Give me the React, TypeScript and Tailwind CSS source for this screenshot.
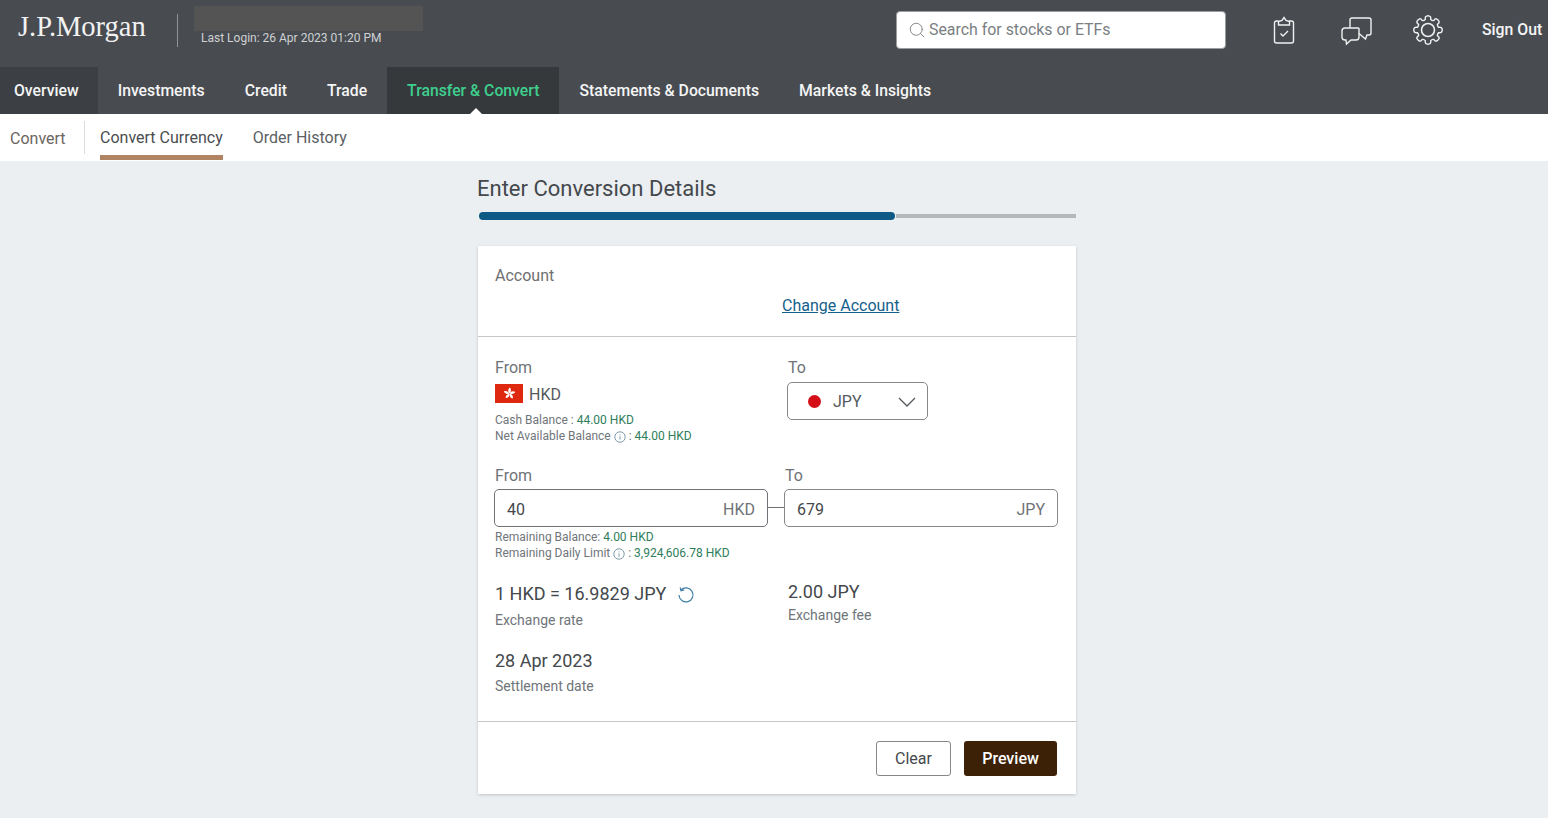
import type { ReactNode } from "react";
import { Search } from "lucide-react";

const tabs = ["Overview", "Investments", "Credit", "Trade", "Transfer & Convert", "Statements & Documents", "Markets & Insights"];

// polar point on the gear, centred on 15,15
function pt(r: number, deg: number) {
  const a = ((deg - 90) * Math.PI) / 180;
  return `${(15 + r * Math.cos(a)).toFixed(2)} ${(15 + r * Math.sin(a)).toFixed(2)}`;
}

function gearPath() {
  const out = 14;
  const inner = 11;
  let d = `M${pt(inner, -14)}`;
  for (let i = 0; i < 8; i++) {
    const a = i * 45;
    d += ` Q${pt(out, a - 13)} ${pt(out, a - 6)}`;
    d += ` Q${pt(out + 0.5, a)} ${pt(out, a + 6)}`;
    d += ` Q${pt(out, a + 13)} ${pt(inner, a + 14)}`;
    d += ` Q${pt(inner - 1, a + 22.5)} ${pt(inner, a + 31)}`;
  }
  return d + "Z";
}

function ClipboardIcon() {
  return (
    <svg width="22" height="28" viewBox="0 0 22 28" fill="none" stroke="#f0f0f0" strokeWidth="1.4">
      <path d="M5.5 5H3.5C2.4 5 1.5 5.9 1.5 7V25c0 1.1.9 2 2 2h15c1.1 0 2-.9 2-2V7c0-1.100-.9-2-2-2H16" />
      <path d="M5.5 9V5.5L9 4.500 11 1.500l2 3 3.500 1V9z" />
      <path d="M7.500 17.500l2.500 2.500 5-5" />
    </svg>
  );
}

function ChatIcon() {
  return (
    <svg width="32" height="30" viewBox="0 0 32 30" fill="none" stroke="#f0f0f0" strokeWidth="1.4">
      <path d="M10 12V4a2 2 0 0 1 2-2H29a2 2 0 0 1 2 2V17a2 2 0 0 1-2 2H27L25.500 23 19 17.500" />
      <path d="M19 12H5a3 3 0 0 0-3 3V21a3 3 0 0 0 3 3H6L6.500 28 11 24H16a3 3 0 0 0 3-3V12" />
    </svg>
  );
}

function GearIcon() {
  return (
    <svg width="30" height="30" viewBox="0 0 30 30" fill="none" stroke="#f0f0f0" strokeWidth="1.4">
      <path d={gearPath()} />
      <circle cx="15" cy="15" r="6.500" strokeWidth="1.600" />
    </svg>
  );
}

function InfoIcon() {
  return (
    <svg width="12" height="12" viewBox="0 0 12 12" fill="none" className="inline-block" stroke="#5f8296" strokeWidth="0.8">
      <circle cx="6" cy="6" r="5.200" />
      <path d="M6 5.300v3.400M6 3.400v.9" />
    </svg>
  );
}

function HkFlag() {
  return (
    <div className="-mt-px flex h-[19px] w-[28px] items-center justify-center bg-[#de2910]">
      <svg width="13" height="13" viewBox="0 0 12 12" fill="#fff">
        {[0, 72, 144, 216, 288].map((a) => (
          <path key={a} d="M6 5.800C4.300 4.500 4.400 1.800 6.400.5 7.800 2 7.500 4.500 6 5.800z" transform={`rotate(${a} 6 6)`} />
        ))}
      </svg>
    </div>
  );
}

function Caption({ children }: { children: ReactNode }) {
  return <p className="h-[16px] text-[12px] leading-[16px] text-[#70757a]">{children}</p>;
}

function Green({ children }: { children: ReactNode }) {
  return <span className="text-[#2e7d5b]">{children}</span>;
}

export default function App() {
  return (
    <div className="h-[818px] overflow-hidden bg-[#ebeff2] font-['Roboto',sans-serif]">
      <header className="h-[114px] bg-[#484c51]">
        <div className="flex h-[67px]">
          <div className="ml-[18px] mt-[9px] w-[130px] whitespace-nowrap font-['Liberation_Serif',serif] text-[28.5px] leading-[36px] text-[#f2f2f2]">
            J.P.Morgan
          </div>
          <div className="ml-[29px] mt-[14px] h-[33px] w-px bg-[#8f9396]" />
          <div className="ml-[16px] mt-[6px] w-[229px]">
            <div className="h-[25px] bg-[#545454]" />
            <p className="ml-[7px] text-[12px] leading-[14px] text-[#cfd1d3]">Last Login: 26 Apr 2023 01:20 PM</p>
          </div>
          <div className="ml-[473px] mt-[11px] flex h-[38px] w-[330px] items-center rounded-[4px] border border-[#9a9ea1] bg-white pl-[11px]">
            <Search size={18} strokeWidth={1.1} className="text-[#6f7478]" />
            <span className="ml-[3px] text-[15.9px] text-[#7a7f83]">Search for stocks or ETFs</span>
          </div>
          <div className="ml-[47px] mt-[16px]"><ClipboardIcon /></div>
          <div className="ml-[45px] mt-[16px]"><ChatIcon /></div>
          <div className="ml-[41px] mt-[15px]"><GearIcon /></div>
          <div className="ml-[39px] mt-[20px] whitespace-nowrap text-[15.8px] font-medium leading-[20px] text-[#f5f5f5]">Sign Out</div>
        </div>
        <nav className="flex h-[47px] text-[15.75px] font-medium">
          {tabs.map((t, i) => (
            <div
              key={t}
              className={
                i === 0
                  ? "relative flex items-center bg-[#3c4044] pl-[14px] pr-[19px] text-[#f5f5f5]"
                  : i === 4
                    ? "relative flex items-center bg-[#36393c] px-[20px] text-[#3ecf8e]"
                    : "flex items-center px-[20px] text-[#f5f5f5]"
              }
            >
              {t}
              {i === 4 && (
                <div className="absolute bottom-0 left-[83px] h-0 w-0 border-x-[6px] border-b-[6px] border-x-transparent border-b-white" />
              )}
            </div>
          ))}
        </nav>
      </header>

      <div className="flex h-[47px] bg-white text-[16px] text-[#5c5f63]">
        <div className="my-[7px] flex w-[85px] items-center border-r border-[#dcdcdc] pl-[10px] pt-[2px] text-[#6b6560]">Convert</div>
        <div className="ml-[15px] flex h-[46px] items-center border-b-[5px] border-[#b08463] pt-[7px] text-[#4a4d50]">Convert Currency</div>
        <div className="ml-[30px] flex h-[46px] items-center border-b-[5px] border-transparent pt-[7px]">Order History</div>
      </div>

      <main className="ml-[478px] w-[598px]">
        <h1 className="-ml-px pt-[13px] text-[22px] leading-[30px] text-[#44484c]">Enter Conversion Details</h1>
        <div className="mt-[8px] flex h-[8px] items-center pl-[1px]">
          <div className="h-[8px] w-[416px] rounded-full bg-[#0f5a85]" />
          <div className="ml-[1px] h-[4px] flex-1 bg-[#b5b7b9]" />
        </div>

        <section className="mt-[26px] h-[548px] bg-white text-[#55595d] shadow-[0_1px_3px_rgba(0,0,0,0.18)]">
          <div className="h-[91px] border-b border-[#c4c6c8] pl-[17px] pt-[19px]">
            <p className="text-[16px] leading-[22px] text-[#6f6f6f]">Account</p>
            <a className="ml-[287px] mt-[8px] block w-fit text-[16px] leading-[22px] text-[#14618c] underline">Change Account</a>
          </div>

          <div className="h-[385px] border-b border-[#c4c6c8] pt-[21px]">
            <div className="flex h-[96px]">
              <div className="ml-[17px] w-[293px]">
                <p className="text-[16px] leading-[20px] text-[#6f7377]">From</p>
                <div className="mt-[7px] flex h-[20px] items-start">
                  <HkFlag />
                  <span className="ml-[6px] text-[16px] leading-[20px]">HKD</span>
                </div>
                <div className="mt-[7px]">
                  <Caption>Cash Balance : <Green>44.00 HKD</Green></Caption>
                  <Caption>Net Available Balance <InfoIcon /> : <Green>44.00 HKD</Green></Caption>
                </div>
              </div>
              <div>
                <p className="text-[16px] leading-[20px] text-[#6f7377]">To</p>
                <div className="-ml-px mt-[4px] flex h-[38px] w-[141px] items-center rounded-[5px] border border-[#85888b] pl-[20px] pr-[11px]">
                  <div className="h-[13px] w-[13px] rounded-full bg-[#d40f18]" />
                  <span className="ml-[12px] flex-1 pt-[2px] text-[16px]">JPY</span>
                  <svg width="18" height="10" viewBox="0 0 18 10" fill="none" stroke="#55595d" strokeWidth="1.3" className="mt-[1px]">
                    <path d="M1 1l8 8 8-8" />
                  </svg>
                </div>
              </div>
            </div>

            <div className="mt-[12px] flex pl-[16px]">
              <div className="w-[274px]">
                <p className="ml-[1px] text-[16px] leading-[20px] text-[#6f7377]">From</p>
                <div className="mt-[3px] flex h-[38px] items-center justify-between rounded-[5px] border border-[#6e7276] px-[12px] pt-[4px] text-[16px]">
                  <span className="text-[#44484c]">40</span>
                  <span className="text-[#6f7377]">HKD</span>
                </div>
                <div className="ml-[1px] mt-[2px]">
                  <Caption>Remaining Balance: <Green>4.00 HKD</Green></Caption>
                  <Caption>Remaining Daily Limit <InfoIcon /> : <Green>3,924,606.78 HKD</Green></Caption>
                </div>
              </div>
              <div className="mt-[41px] h-px w-[16px] bg-[#6e7276]" />
              <div className="w-[274px]">
                <p className="ml-[1px] text-[16px] leading-[20px] text-[#6f7377]">To</p>
                <div className="mt-[3px] flex h-[38px] items-center justify-between rounded-[5px] border border-[#85888b] px-[12px] pt-[4px] text-[16px]">
                  <span className="text-[#44484c]">679</span>
                  <span className="text-[#6f7377]">JPY</span>
                </div>
              </div>
            </div>

            <div className="mt-[20px] flex">
              <div className="ml-[17px] w-[293px]">
                <div className="flex h-[24px] items-center">
                  <span className="text-[18px] text-[#44484c]">1 HKD = 16.9829 JPY</span>
                  <svg width="18" height="18" viewBox="0 0 18 18" fill="none" stroke="#3f7ea3" strokeWidth="1.2" className="ml-[11px] mt-[3px]">
                    <path d="M4 4A7 7 0 1 1 2 9" />
                    <path d="M3.2 1.5L4 4.7l3.2-.9" />
                  </svg>
                </div>
                <p className="mt-[5px] text-[14px] leading-[20px] text-[#70757a]">Exchange rate</p>
              </div>
              <div className="-mt-px">
                <p className="h-[24px] text-[18px] leading-[24px] text-[#44484c]">2.00 JPY</p>
                <p className="mt-[1px] text-[14px] leading-[20px] text-[#70757a]">Exchange fee</p>
              </div>
            </div>

            <div className="ml-[17px] mt-[19px]">
              <p className="text-[18px] leading-[24px] text-[#44484c]">28 Apr 2023</p>
              <p className="mt-[3px] text-[14px] leading-[20px] text-[#70757a]">Settlement date</p>
            </div>
          </div>

          <div className="flex justify-end gap-[13px] pr-[19px] pt-[19px]">
            <button className="h-[35px] w-[75px] rounded-[3px] border border-[#85888b] text-[16px] text-[#44484c]">Clear</button>
            <button className="h-[35px] w-[93px] rounded-[3px] bg-[#3c2106] text-[16px] font-medium text-white">Preview</button>
          </div>
        </section>
      </main>
    </div>
  );
}
